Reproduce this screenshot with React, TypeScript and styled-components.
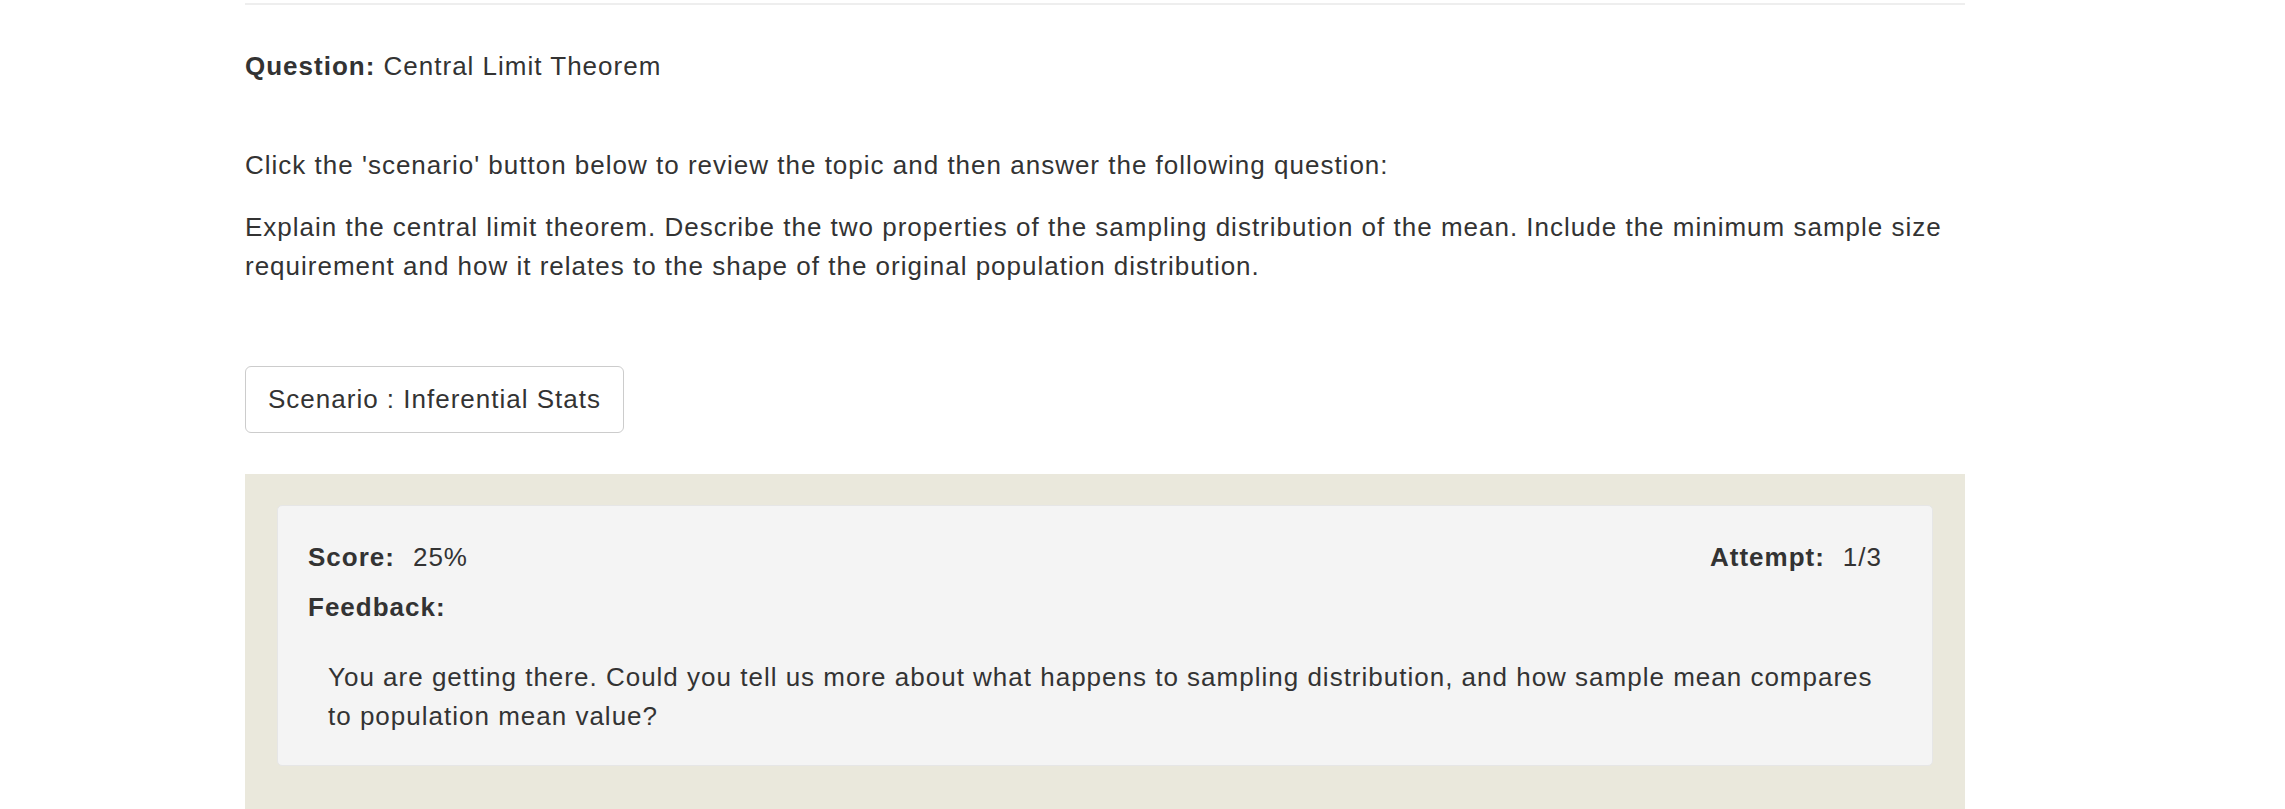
import React from "react";
import styled, { createGlobalStyle } from "styled-components";

const GlobalStyle = createGlobalStyle`
  html, body {
    margin: 0;
    padding: 0;
    background: #ffffff;
  }
  body {
    font-family: "Liberation Sans", Arial, Helvetica, sans-serif;
    font-size: 26px;
    letter-spacing: 1px;
    line-height: 39px;
    color: #333333;
  }
`;

const Page = styled.div`
  padding-top: 3px;
  padding-left: 245px;
`;

const Container = styled.main`
  width: 1720px;
  border-top: 2px solid #eeeeee;
  display: flex;
  flex-direction: column;
`;

const QuestionTitle = styled.h2`
  margin: 42px 0 0;
  font-size: 26px;
  font-weight: normal;
  line-height: 39px;
`;

const Bold = styled.strong`
  font-weight: bold;
`;

const Prompt = styled.p<{ $top: number }>`
  margin: ${(p) => p.$top}px 0 0;
`;

const ScenarioButton = styled.button`
  align-self: flex-start;
  margin-top: 80px;
  height: 67px;
  padding: 0 22px;
  background: #ffffff;
  border: 1px solid #cccccc;
  border-radius: 6px;
  font-family: inherit;
  font-size: 26px;
  letter-spacing: 1px;
  line-height: 39px;
  color: #333333;
  cursor: pointer;
`;

const ResultPanel = styled.section`
  margin-top: 41px;
  background: #eae8dc;
  padding: 31px 32px 80px;
`;

const ResultCard = styled.div`
  background: #f4f4f4;
  border: 1px solid #e6e6e6;
  border-radius: 5px;
  padding: 32px 30px 29px;
  display: flex;
  flex-direction: column;
`;

const HeaderRow = styled.div`
  display: flex;
  justify-content: space-between;
  padding-right: 20px;
`;

const Stat = styled.div`
  display: flex;
  gap: 18px;
`;

const Label = styled.span`
  font-weight: bold;
`;

const FeedbackLabel = styled.div`
  margin-top: 11px;
  font-weight: bold;
`;

const FeedbackText = styled.p`
  margin: 31px 0 0;
  padding: 0 0 0 20px;
`;

export default function App() {
  return (
    <>
      <GlobalStyle />
      <Page>
        <Container>
          <QuestionTitle>
            <Bold>Question:</Bold> Central Limit Theorem
          </QuestionTitle>
          <Prompt $top={60}>
            Click the 'scenario' button below to review the topic and then answer the following question:
          </Prompt>
          <Prompt $top={23}>
            Explain the central limit theorem. Describe the two properties of the sampling distribution of
            the mean. Include the minimum sample size requirement and how it relates to the shape of the
            original population distribution.
          </Prompt>
          <ScenarioButton type="button">Scenario : Inferential Stats</ScenarioButton>
          <ResultPanel>
            <ResultCard>
              <HeaderRow>
                <Stat>
                  <Label>Score:</Label>
                  <span>25%</span>
                </Stat>
                <Stat>
                  <Label>Attempt:</Label>
                  <span>1/3</span>
                </Stat>
              </HeaderRow>
              <FeedbackLabel>Feedback:</FeedbackLabel>
              <FeedbackText>
                You are getting there. Could you tell us more about what happens to sampling distribution,
                and how sample mean compares to population mean value?
              </FeedbackText>
            </ResultCard>
          </ResultPanel>
        </Container>
      </Page>
    </>
  );
}
